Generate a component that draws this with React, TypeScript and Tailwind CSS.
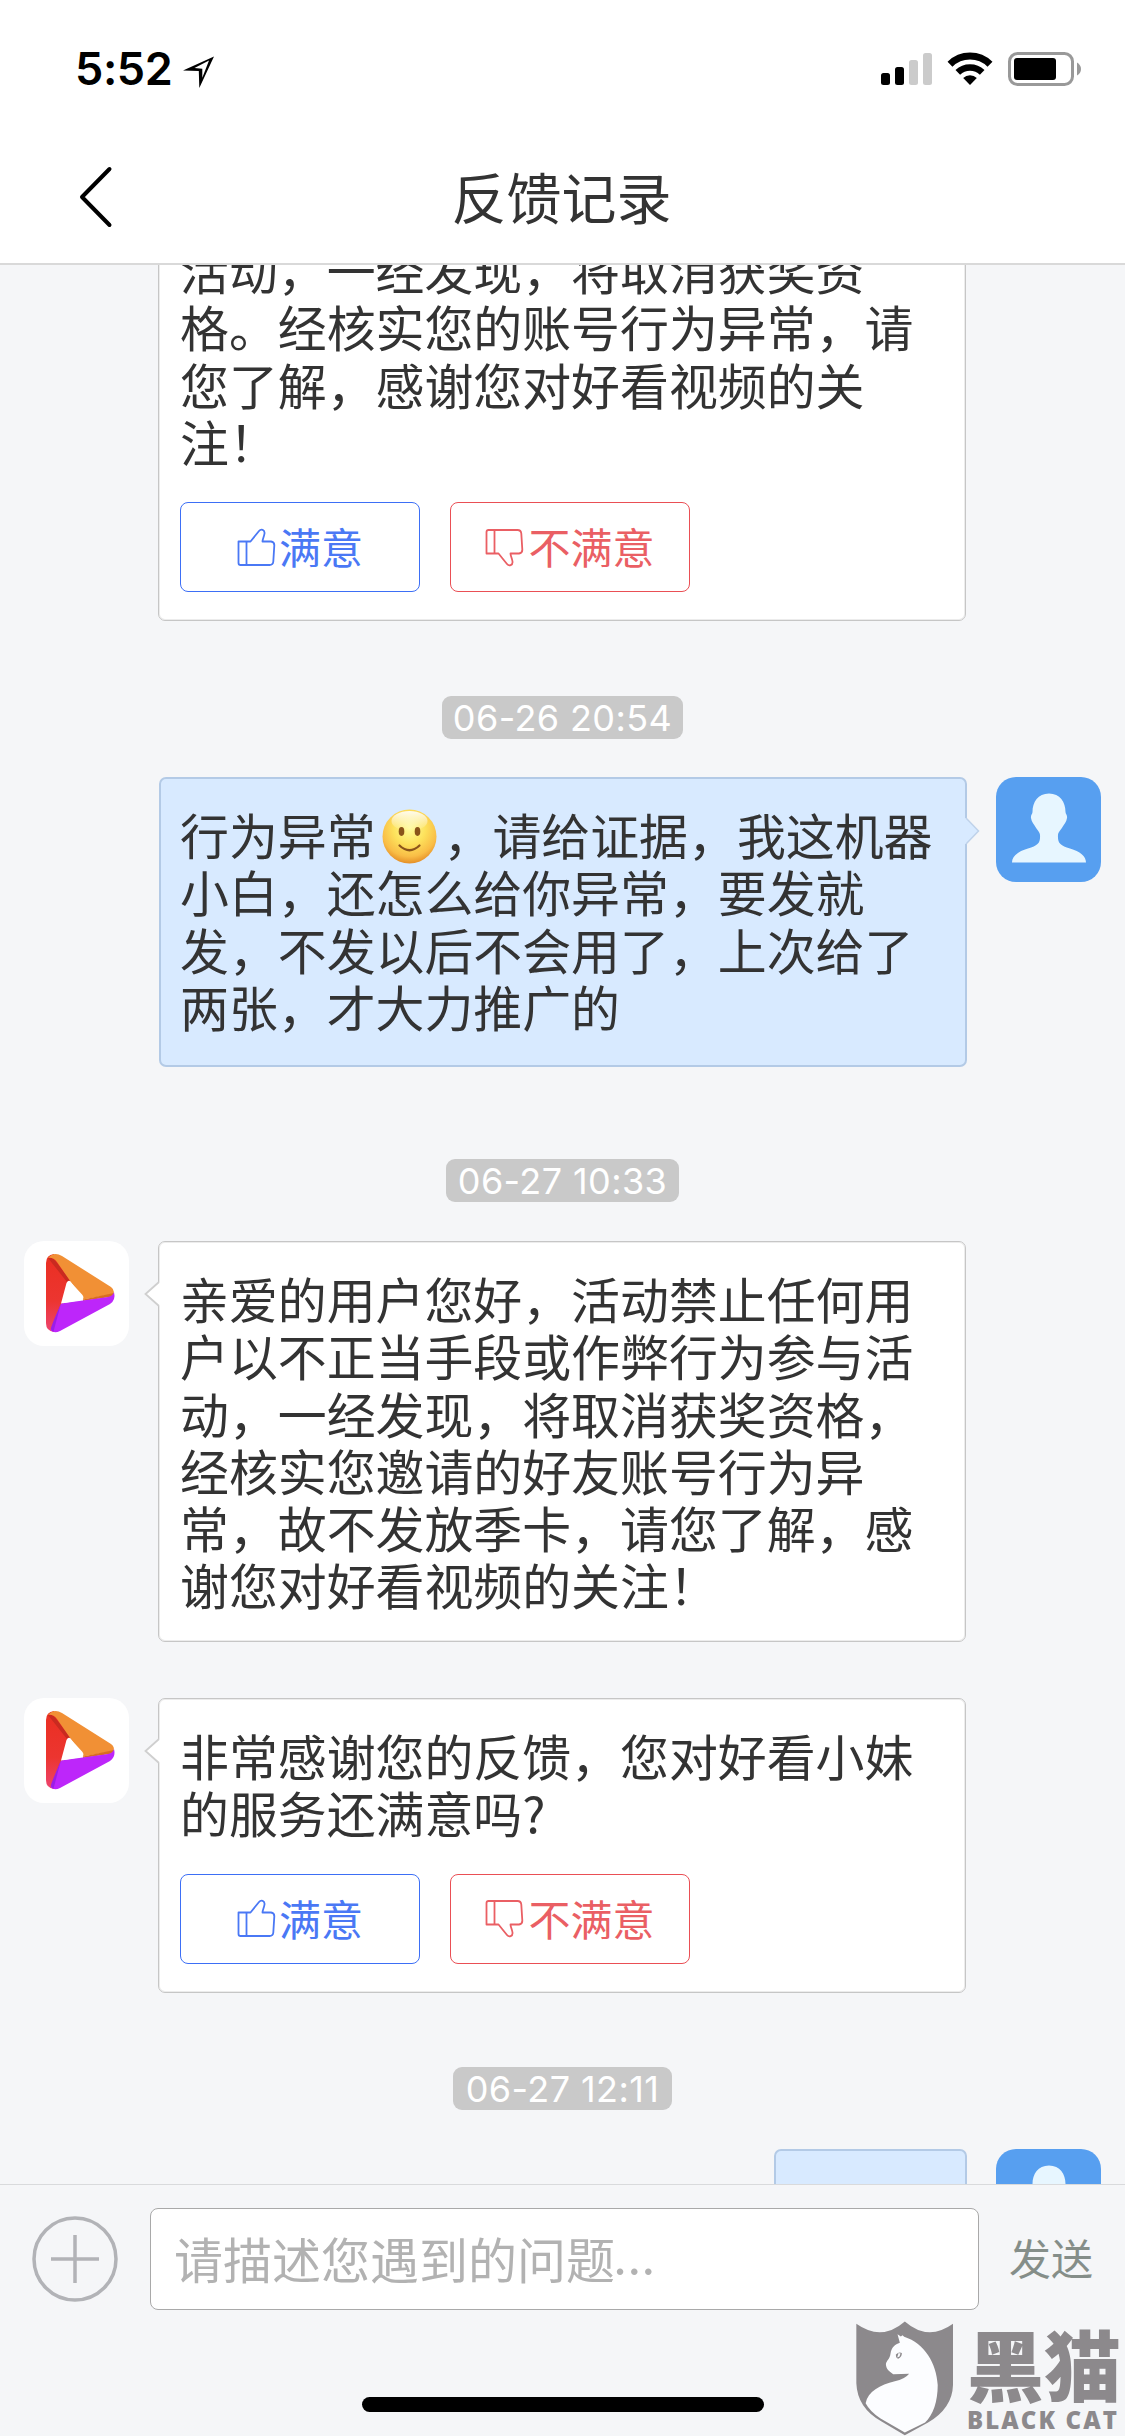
import React from 'react';

const StatusBar: React.FC = () => (
  <div className="flex h-[136px] items-start justify-between pl-[75px] pr-[42px]">
    <div className="flex items-start pt-[42px]">
      <span className="w-[98px] font-['Inter'] text-[45px] leading-[54px] font-semibold tracking-[-0.4px] text-black">5:52</span>
      <svg className="mt-[14px] ml-[10px]" width="32" height="34" viewBox="0 0 32 34">
        <path d="M31 0.5 L0 14.500 L15.800 15 L16.300 32 Z M26 4.500 L11.500 12 L19.300 12.700 L19.300 21.700 Z" fill="black" fillRule="evenodd" />
      </svg>
    </div>
    <div className="flex items-start pt-[52px]">
      <svg width="52" height="34" viewBox="0 0 52 34">
        <rect x="0" y="21" width="9" height="12" rx="2.5" fill="black" />
        <rect x="14" y="15" width="9" height="18" rx="2.5" fill="black" />
        <rect x="28" y="8" width="9" height="25" rx="2.5" fill="#cbcbcb" />
        <rect x="42" y="1" width="9" height="32" rx="2.5" fill="#cbcbcb" />
      </svg>
      <svg className="ml-[14px]" width="46" height="34" viewBox="0 0 46 34" fill="none" stroke="black">
        <path d="M3 12.3 A28.5 28.5 0 0 1 43 12.3" strokeWidth="7" />
        <path d="M10.8 20.4 A17.5 17.5 0 0 1 35.2 20.4" strokeWidth="6.6" />
        <path d="M23 33 L16.2 26 A9.6 9.6 0 0 1 29.8 26 Z" fill="black" stroke="none" />
      </svg>
      <svg className="ml-[15px]" width="75" height="34" viewBox="0 0 75 34">
        <rect x="1.5" y="1.5" width="63" height="31" rx="8" fill="none" stroke="#999" strokeWidth="3" />
        <rect x="6" y="6" width="42" height="22" rx="3" fill="black" />
        <path d="M69 10.5 Q73 13 73 17 Q73 21 69 23.5 Z" fill="#999" />
      </svg>
    </div>
  </div>
);

const NavBar: React.FC = () => (
  <div className="grid flex-1 grid-cols-3 items-start">
    <svg className="mt-[30px] ml-[78px]" width="36" height="62" viewBox="0 0 36 62" fill="none">
      <path d="M31.5 3 L4 31 L31.5 59" stroke="black" strokeWidth="4" strokeLinecap="round" strokeLinejoin="round" />
    </svg>
    <h1 className="mt-[19px] -ml-[2px] text-center text-[55px] leading-[80px] whitespace-nowrap text-[#333]">反馈记录</h1>
  </div>
);

const Smile: React.FC = () => (
  <svg className="mr-[7px] ml-[6px] inline-block align-[-9px]" width="55" height="55" viewBox="0 0 55 55">
    <defs>
      <radialGradient id="face" cx="50%" cy="35%" r="65%">
        <stop offset="0" stopColor="#fffb9a" />
        <stop offset="0.45" stopColor="#fde25c" />
        <stop offset="0.8" stopColor="#f9bd46" />
        <stop offset="1" stopColor="#e58f27" />
      </radialGradient>
      <linearGradient id="shine" x1="0" y1="0" x2="0" y2="1">
        <stop offset="0" stopColor="#fff" stopOpacity="0.9" />
        <stop offset="1" stopColor="#fff" stopOpacity="0" />
      </linearGradient>
    </defs>
    <circle cx="27.5" cy="27.5" r="27" fill="url(#face)" />
    <ellipse cx="27.5" cy="12" rx="18" ry="10" fill="url(#shine)" />
    <ellipse cx="19.5" cy="22.5" rx="2.8" ry="4.4" fill="#8a541a" />
    <ellipse cx="35.5" cy="22.5" rx="2.8" ry="4.4" fill="#8a541a" />
    <path d="M17.5 36.5 Q27.5 46 37.5 36.5" fill="none" stroke="#8a541a" strokeWidth="2.2" strokeLinecap="round" />
  </svg>
);

const ServiceAvatar: React.FC = () => (
  <div className="h-[105px] w-[105px] shrink-0 rounded-[20px] bg-white">
    <svg width="105" height="105" viewBox="0 0 105 105">
      <defs>
        <linearGradient id="red" x1="0" y1="0" x2="0" y2="1">
          <stop offset="0" stopColor="#ea2f22" />
          <stop offset="0.6" stopColor="#ec3530" />
          <stop offset="1" stopColor="#ee4470" />
        </linearGradient>
      </defs>
      <path d="M22 22 Q22 14 30 13 L47 39 L30 91 Q22 90 22 82 Z" fill="url(#red)" />
      <path d="M24 17 Q29 16 33 22 L46 39 L43 41 Z" fill="#c92a20" />
      <path d="M24 17 Q30 10 38 15 L87 46 Q91 49 89.500 53 L59 58.500 L33 21 Q29 16 24 17 Z" fill="#f19035" />
      <path d="M59 58.500 L90 52 Q89 56 86 56 L59 60 Z" fill="#d86e20" />
      <path d="M37 62.500 L84 56 Q89 55 90 51 Q92 59 86 63 L36 90 Q30 93 26.500 89 Z" fill="#bd26fa" />
      <path d="M37 62.500 L29.500 90.500 Q27 90 27 87 Q28 83 37 62.500 Z" fill="#9a1fe6" />
      <path d="M42.500 42 Q45 37.500 47.500 42 L58.500 54 Q61 58 57 59 L37 62.500 Z" fill="white" />
    </svg>
  </div>
);

const UserAvatar: React.FC = () => (
  <div className="h-[105px] w-[105px] shrink-0 rounded-[20px] bg-[#579ff0]">
    <svg width="105" height="105" viewBox="0 0 105 105">
      <path
        d="M53 16.500 C64 16.500 69.500 25 69.500 35 C69.500 37 71.500 38 71 41 C70.500 45 68 47 66.500 50 C65 53 62 55 62 58 C61.500 66 64 68.500 74 71.500 C84 74.500 90 79 90 85.500 L16 85.500 C16 79 22 74.500 32 71.500 C42 68.500 44.500 66 44 58 C44 55 41 53 39.500 50 C38 47 35.500 45 35 41 C34.500 38 36.500 37 36.500 35 C36.500 25 42 16.500 53 16.500 Z"
        fill="#e7f6ff"
      />
    </svg>
  </div>
);

const ThumbIcon: React.FC = () => (
  <svg width="39" height="39" viewBox="0 0 39 39" fill="none" stroke="currentColor" strokeWidth="1.8" strokeLinejoin="round">
    <path d="M1.500 13.500 H13.500 L22 3 C24 0.500 28 1.500 27.500 5.500 C27 9 25.500 11 25.500 13.500 H34 Q37.500 14 37.300 17.500 L36.300 33.500 Q36 37 32.500 37 H3.500 Q1.500 37 1.500 35 Z" />
    <path d="M9.500 13.500 V37" />
  </svg>
);

// 满意 / 不满意
const RateButtons: React.FC = () => (
  <div className="mt-[33px] flex gap-[30px]">
    <button className="flex h-[90px] w-[240px] items-center justify-center rounded-[8px] border border-[#3d6ff6] text-[42px] leading-[60px] text-[#4a78f5]">
      <ThumbIcon />
      <span className="mt-[-2px] ml-[3px]">满意</span>
    </button>
    <button className="flex h-[90px] w-[240px] items-center justify-center rounded-[8px] border border-[#ea4f55] text-[42px] leading-[60px] text-[#ea5f64]">
      <span className="-scale-y-100">
        <ThumbIcon />
      </span>
      <span className="mt-[-2px] ml-[4px]">不满意</span>
    </button>
  </div>
);

const TimeStamp: React.FC<{ children: string; className: string }> = ({ children, className }) => (
  <div className={`mx-auto flex h-[43px] shrink-0 items-center justify-center rounded-[9px] bg-[#c9c9c9] font-['Inter'] text-[36px] tracking-[0.4px] whitespace-nowrap text-white ${className}`}>
    {children}
  </div>
);

type BubbleProps = {
  lines: React.ReactNode[];
  tail?: boolean;
  children?: React.ReactNode;
};

const ServiceBubble: React.FC<BubbleProps> = ({ lines, tail, children }) => (
  <div className="relative w-[808px] rounded-[7px] border-[1.5px] border-[#c6c6c6] bg-white pt-[27px] pb-[28px] pl-[21px] shadow-[inset_0_0_0_1px_#ececec]">
    {tail && (
      <svg className="absolute top-[39px] left-[-15px]" width="17" height="26" viewBox="0 0 17 26">
        <path d="M17 1 L15 1 L1.500 13 L15 25 L17 25 Z" fill="white" />
        <path d="M15 1 L1.500 13 L15 25" fill="none" stroke="#cfcfcf" strokeWidth="1.800" />
      </svg>
    )}
    {lines.map((line, i) => (
      <p key={i} className="h-[57.3px] text-[48.9px] leading-[57.3px] whitespace-nowrap text-[#333]">{line}</p>
    ))}
    {children}
  </div>
);

const UserBubble: React.FC<BubbleProps> = ({ lines }) => (
  <div className="relative h-[290px] w-[808px] rounded-[7px] border-2 border-[#b3cae6] bg-[#d8eaff] pt-[26px] pl-[19px]">
    <svg className="absolute top-[38px] right-[-15px]" width="16" height="28" viewBox="0 0 16 28">
      <path d="M0 1 L2 1 L14.500 14 L2 27 L0 27 Z" fill="#d8eaff" />
      <path d="M2 1 L14.500 14 L2 27" fill="none" stroke="#bfd2ea" strokeWidth="1.500" />
    </svg>
    {lines.map((line, i) => (
      <p key={i} className="h-[57.3px] text-[48.9px] leading-[57.3px] whitespace-nowrap text-[#333]">{line}</p>
    ))}
  </div>
);

const BlackCat: React.FC = () => (
  <div className="absolute right-0 bottom-0 flex h-[116px] w-[269px] text-[#8c898c]">
    <svg className="mt-px shrink-0" width="98" height="115" viewBox="48 33 295 345">
      <path d="M49 41 Q125 95 195 34 Q265 95 340 41 V225 Q338 295 265 338 L195 376 L125 335 Q52 295 49 220 Z" fill="currentColor" />
      <path
        d="M173 72 L183 79 L188 75 L193 80 C255 100 290 160 294 225 C294 275 280 315 256 338 L195 368 L122 326 Q90 305 77 280 C84 245 120 225 165 214 Q195 207 208 191 L160 193 C150 185 138 178 138 162 C140 150 150 148 152 130 C155 112 165 103 180 98 Z"
        fill="#fcfdff"
      />
      <path d="M168 133 Q178 124 186 129 Q186 142 175 146 Q168 144 168 133 Z" fill="currentColor" />
      <path d="M176 129 L172 142 L179 139 L182 130 Z" fill="#fcfdff" />
    </svg>
    <div className="ml-[13px] flex flex-col">
      <span className="h-[85px] text-[77px] leading-[85px] font-black whitespace-nowrap">黑猫</span>
      <span className="font-['Open_Sans'] text-[24px] leading-[30px] font-extrabold tracking-[2.1px] whitespace-nowrap">BLACK CAT</span>
    </div>
  </div>
);

const App: React.FC = () => {
  return (
    <div className="relative flex h-[2436px] w-[1125px] flex-col overflow-hidden bg-[#f5f6f8] font-['Noto_Sans_CJK_SC',sans-serif]">
      <header className="flex h-[265px] shrink-0 flex-col border-b-2 border-[#d9d9d9] bg-white">
        <StatusBar />
        <NavBar />
      </header>

      {/* Chat history */}
      <main className="flex h-[1919px] shrink-0 flex-col overflow-hidden">
        <div className="mt-[-53px] h-[409px] shrink-0 pl-[158px]">
          <ServiceBubble lines={['活动，一经发现，将取消获奖资', '格。经核实您的账号行为异常，请', '您了解，感谢您对好看视频的关', '注！']}>
            <RateButtons />
          </ServiceBubble>
        </div>

        <TimeStamp className="mt-[75px] w-[241px]">06-26 20:54</TimeStamp>
        <div className="mt-[38px] flex shrink-0 items-start justify-end gap-[29px] pr-[24px]">
          <UserBubble
            lines={[
              <>行为异常<Smile />，请给证据，我这机器</>,
              '小白，还怎么给你异常，要发就',
              '发，不发以后不会用了，上次给了',
              '两张，才大力推广的',
            ]}
          />
          <UserAvatar />
        </div>

        <TimeStamp className="mt-[92px] w-[233px]">06-27 10:33</TimeStamp>
        <div className="mt-[39px] flex h-[402px] shrink-0 items-start gap-[29px] pl-[24px]">
          <ServiceAvatar />
          <ServiceBubble
            tail
            lines={[
              '亲爱的用户您好，活动禁止任何用',
              '户以不正当手段或作弊行为参与活',
              '动，一经发现，将取消获奖资格，',
              '经核实您邀请的好友账号行为异',
              '常，故不发放季卡，请您了解，感',
              '谢您对好看视频的关注！',
            ]}
          />
        </div>
        <div className="mt-[55px] flex h-[295px] shrink-0 items-start gap-[29px] pl-[24px]">
          <ServiceAvatar />
          <ServiceBubble tail lines={['非常感谢您的反馈，您对好看小妹', '的服务还满意吗?']}>
            <RateButtons />
          </ServiceBubble>
        </div>

        <TimeStamp className="mt-[74px] w-[219px]">06-27 12:11</TimeStamp>
        <div className="mt-[39px] flex shrink-0 items-start justify-end gap-[29px] pr-[24px]">
          <div className="h-[120px] w-[193px] rounded-[7px] border-2 border-[#b3cae6] bg-[#d8eaff]" />
          <UserAvatar />
        </div>
      </main>

      {/* Input bar */}
      <footer className="flex flex-1 flex-col border-t border-[#d9dadc]">
        <div className="flex items-start pt-[23px] pl-[32px]">
          <svg className="mt-[8px]" width="86" height="86" viewBox="0 0 86 86" fill="none" stroke="#b2b3b7" strokeWidth="3.5">
            <circle cx="43" cy="43" r="41" />
            <path d="M19 43 H67 M43 19 V67" />
          </svg>
          <div className="ml-[32px] flex h-[102px] w-[829px] items-center rounded-[8px] border border-[#a9a9a9] bg-white pb-[2px] pl-[23px] text-[49px] leading-[70px] whitespace-nowrap text-[#b2b2b2]">
            请描述您遇到的问题<span className="-ml-[2px] font-['Inter']">...</span>
          </div>
          <button className="mt-[19px] ml-[30px] text-[42px] leading-[60px] text-[#858e89]">发送</button>
        </div>
        <div className="mx-auto mt-[87px] h-[15px] w-[402px] rounded-full bg-black" />
      </footer>

      <BlackCat />
    </div>
  );
};

export default App;
